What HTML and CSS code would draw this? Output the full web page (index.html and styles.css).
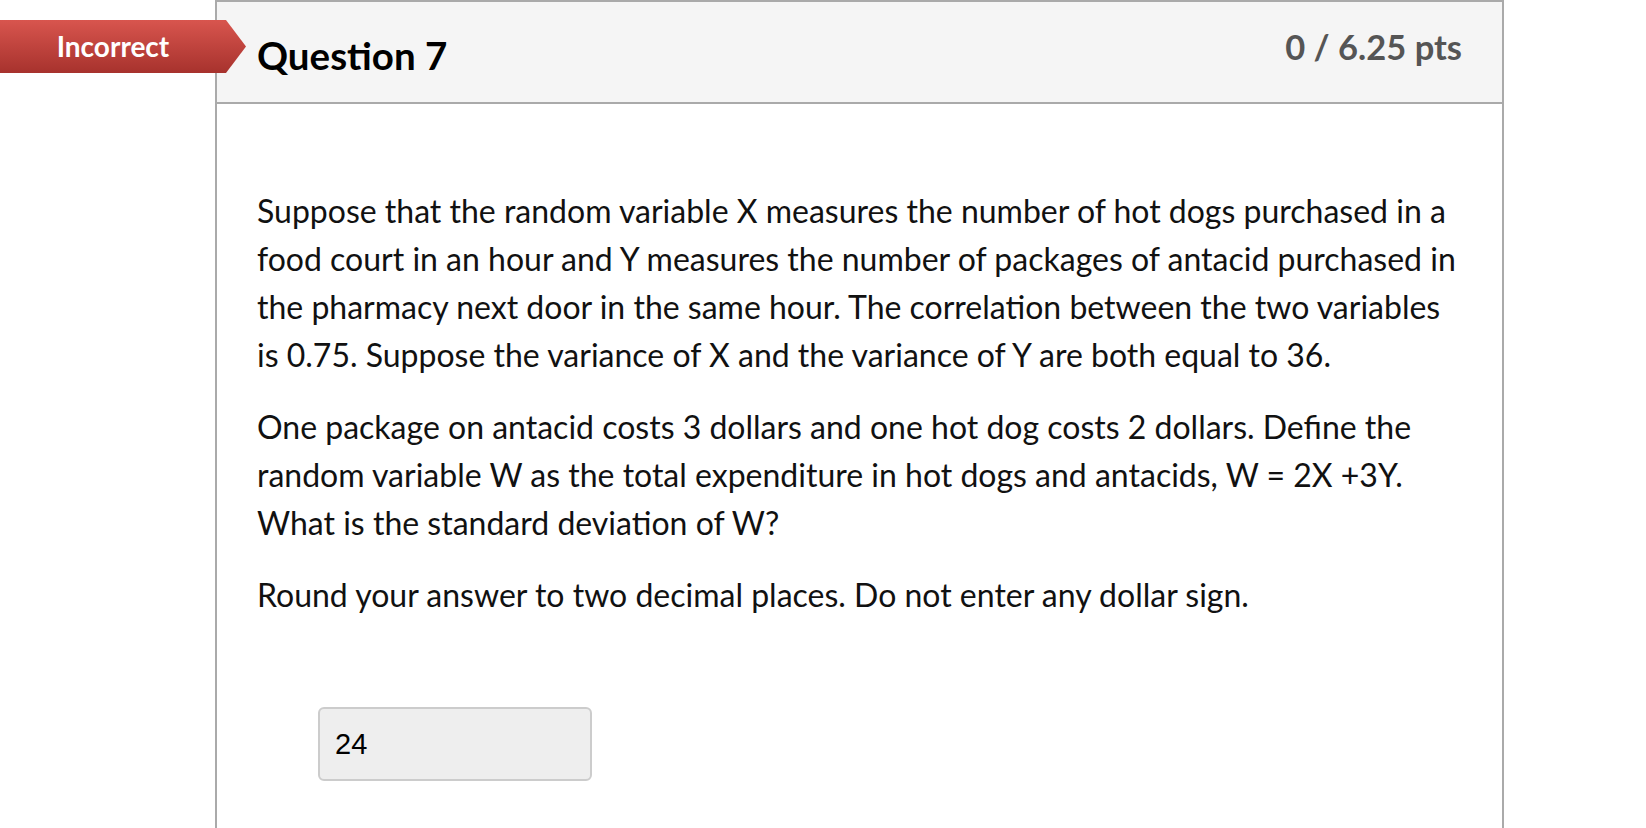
FILE: index.html
```html
<!DOCTYPE html>
<html lang="en">
<head>
<meta charset="utf-8">
<title>Question 7</title>
<link rel="stylesheet" href="styles.css">
</head>
<body>
<div class="page">
  <div class="question">
    <div class="badge">Incorrect</div>
    <div class="header">
      <h2 class="title">Question 7</h2>
      <div class="pts">0 / 6.25 pts</div>
    </div>
    <div class="content">
      <p>Suppose that the random variable X measures the number of hot dogs purchased in a food court in an hour and Y measures the number of packages of antacid purchased in the pharmacy next door in the same hour. The correlation between the two variables is 0.75. Suppose the variance of X and the variance of Y are both equal to 36.</p>
      <p>One package on antacid costs 3 dollars and one hot dog costs 2 dollars. Define the random variable W as the total expenditure in hot dogs and antacids, W = 2X +3Y. What is the standard deviation of W?</p>
      <p>Round your answer to two decimal places. Do not enter any dollar sign.</p>
      <div class="answer">
        <div class="answer-box">24</div>
      </div>
    </div>
  </div>
</div>
</body>
</html>
```
FILE: styles.css
```css
html, body {
  margin: 0;
  padding: 0;
  background: #fff;
}
body {
  font-family: Lato, "Noto Sans", sans-serif;
  color: #111;
  overflow: hidden;
}
.page {
  padding-left: 215px;
}
.question {
  position: relative;
  width: 1285px;
  border: 2px solid #aaa;
  border-bottom: none;
  min-height: 900px;
}
.badge {
  position: absolute;
  left: -217px;
  top: 18px;
  width: 226px;
  padding-right: 20px;
  height: 53px;
  line-height: 53px;
  text-align: center;
  color: #fff;
  font-weight: 700;
  font-size: 28px;
  background: linear-gradient(#d8554e, #a7322d);
  clip-path: polygon(0 0, 226px 0, 100% 50%, 226px 100%, 0 100%);
  z-index: 2;
}
.header {
  display: flex;
  justify-content: space-between;
  align-items: flex-start;
  height: 100px;
  background: #f5f5f5;
  border-bottom: 2px solid #aaa;
  padding: 0 40px 0 40px;
}
.title {
  margin: 0;
  font-size: 38.5px;
  font-weight: 700;
  line-height: 1;
  padding-top: 34px;
  color: #000;
}
.pts {
  font-size: 34.5px;
  font-weight: 700;
  color: #555;
  line-height: 1;
  padding-top: 28px;
}
.content {
  padding: 83px 40px 0 40px;
  font-size: 32px;
  line-height: 48px;
}
.content p {
  margin: 0 0 24px 0;
}
.answer {
  padding: 64px 0 0 61px;
}
.answer-box {
  box-sizing: border-box;
  width: 274px;
  height: 74px;
  background: #eee;
  border: 2px solid #ccc;
  border-radius: 6px;
  font-family: "Liberation Sans", Arial, sans-serif;
  font-size: 29px;
  line-height: 70px;
  padding-left: 15px;
  color: #000;
}
```
